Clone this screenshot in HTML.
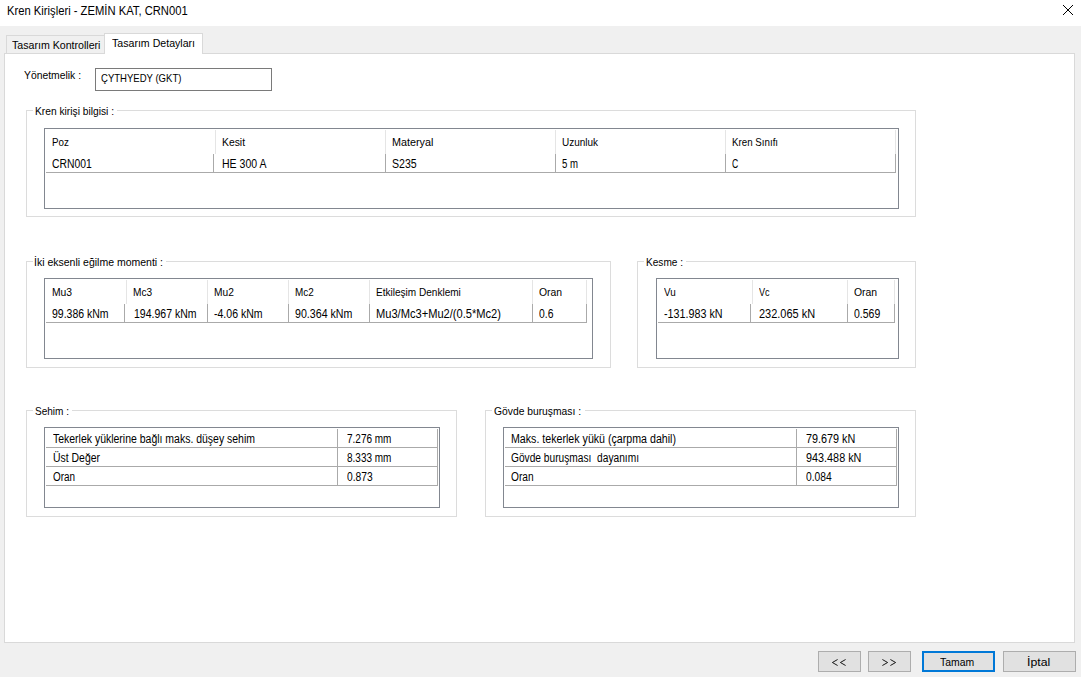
<!DOCTYPE html>
<html><head><meta charset="utf-8"><style>
html,body{margin:0;padding:0}
body{width:1081px;height:677px;background:#f0f0f0;position:relative;overflow:hidden;font-family:"Liberation Sans",sans-serif;color:#000}
.b{position:absolute;box-sizing:content-box}
.t{position:absolute;white-space:pre;transform-origin:0 0}
</style></head><body>
<div class="b" style="left:0px;top:0px;width:1081px;height:26px;background:#ffffff"></div>
<div class="b" style="left:4px;top:53px;width:1069px;height:588px;border:1px solid #d9d9d9;background:#ffffff;"></div>
<div class="b" style="left:6px;top:35px;width:97px;height:17px;border:1px solid #d9d9d9;border-bottom:none;background:#f0f0f0"></div>
<div class="b" style="left:104px;top:33px;width:97px;height:20px;border:1px solid #d9d9d9;border-bottom:none;background:#ffffff"></div>
<div class="b" style="left:95px;top:68px;width:175px;height:21px;border:1px solid #7a7a7a;background:#ffffff;"></div>
<div class="b" style="left:26px;top:110px;width:888px;height:105px;border:1px solid #dcdcdc;"></div>
<div class="b" style="left:33px;top:110px;width:84px;height:1px;background:#ffffff"></div>
<div class="b" style="left:26px;top:261px;width:583px;height:105px;border:1px solid #dcdcdc;"></div>
<div class="b" style="left:33px;top:261px;width:133px;height:1px;background:#ffffff"></div>
<div class="b" style="left:637px;top:261px;width:277px;height:105px;border:1px solid #dcdcdc;"></div>
<div class="b" style="left:644px;top:261px;width:42px;height:1px;background:#ffffff"></div>
<div class="b" style="left:26px;top:410px;width:429px;height:105px;border:1px solid #dcdcdc;"></div>
<div class="b" style="left:33px;top:410px;width:39px;height:1px;background:#ffffff"></div>
<div class="b" style="left:485px;top:410px;width:429px;height:105px;border:1px solid #dcdcdc;"></div>
<div class="b" style="left:492px;top:410px;width:93px;height:1px;background:#ffffff"></div>
<div class="b" style="left:44px;top:128px;width:853px;height:79px;border:1px solid #828790;background:#ffffff;"></div>
<div class="b" style="left:215px;top:130px;width:1px;height:24px;background:#e5e5e5"></div>
<div class="b" style="left:385px;top:130px;width:1px;height:24px;background:#e5e5e5"></div>
<div class="b" style="left:555px;top:130px;width:1px;height:24px;background:#e5e5e5"></div>
<div class="b" style="left:725px;top:130px;width:1px;height:24px;background:#e5e5e5"></div>
<div class="b" style="left:895px;top:130px;width:1px;height:24px;background:#e5e5e5"></div>
<div class="b" style="left:213px;top:154px;width:1px;height:19px;background:#aaaaaa"></div>
<div class="b" style="left:385px;top:154px;width:1px;height:19px;background:#aaaaaa"></div>
<div class="b" style="left:555px;top:154px;width:1px;height:19px;background:#aaaaaa"></div>
<div class="b" style="left:725px;top:154px;width:1px;height:19px;background:#aaaaaa"></div>
<div class="b" style="left:895px;top:154px;width:1px;height:19px;background:#aaaaaa"></div>
<div class="b" style="left:46px;top:172px;width:850px;height:1px;background:#aaaaaa"></div>
<div class="b" style="left:44px;top:278px;width:547px;height:79px;border:1px solid #828790;background:#ffffff;"></div>
<div class="b" style="left:126px;top:280px;width:1px;height:24px;background:#e5e5e5"></div>
<div class="b" style="left:207px;top:280px;width:1px;height:24px;background:#e5e5e5"></div>
<div class="b" style="left:288px;top:280px;width:1px;height:24px;background:#e5e5e5"></div>
<div class="b" style="left:369px;top:280px;width:1px;height:24px;background:#e5e5e5"></div>
<div class="b" style="left:532px;top:280px;width:1px;height:24px;background:#e5e5e5"></div>
<div class="b" style="left:586px;top:280px;width:1px;height:24px;background:#e5e5e5"></div>
<div class="b" style="left:124px;top:304px;width:1px;height:19px;background:#aaaaaa"></div>
<div class="b" style="left:207px;top:304px;width:1px;height:19px;background:#aaaaaa"></div>
<div class="b" style="left:288px;top:304px;width:1px;height:19px;background:#aaaaaa"></div>
<div class="b" style="left:369px;top:304px;width:1px;height:19px;background:#aaaaaa"></div>
<div class="b" style="left:532px;top:304px;width:1px;height:19px;background:#aaaaaa"></div>
<div class="b" style="left:586px;top:304px;width:1px;height:19px;background:#aaaaaa"></div>
<div class="b" style="left:46px;top:322px;width:541px;height:1px;background:#aaaaaa"></div>
<div class="b" style="left:656px;top:278px;width:241px;height:79px;border:1px solid #828790;background:#ffffff;"></div>
<div class="b" style="left:752px;top:280px;width:1px;height:24px;background:#e5e5e5"></div>
<div class="b" style="left:847px;top:280px;width:1px;height:24px;background:#e5e5e5"></div>
<div class="b" style="left:894px;top:280px;width:1px;height:24px;background:#e5e5e5"></div>
<div class="b" style="left:750px;top:304px;width:1px;height:19px;background:#aaaaaa"></div>
<div class="b" style="left:847px;top:304px;width:1px;height:19px;background:#aaaaaa"></div>
<div class="b" style="left:894px;top:304px;width:1px;height:19px;background:#aaaaaa"></div>
<div class="b" style="left:658px;top:322px;width:237px;height:1px;background:#aaaaaa"></div>
<div class="b" style="left:44px;top:427px;width:394px;height:79px;border:1px solid #828790;background:#ffffff;"></div>
<div class="b" style="left:46px;top:447px;width:392px;height:1px;background:#aaaaaa"></div>
<div class="b" style="left:46px;top:466px;width:392px;height:1px;background:#aaaaaa"></div>
<div class="b" style="left:46px;top:485px;width:392px;height:1px;background:#aaaaaa"></div>
<div class="b" style="left:337px;top:429px;width:1px;height:57px;background:#aaaaaa"></div>
<div class="b" style="left:437px;top:429px;width:1px;height:57px;background:#aaaaaa"></div>
<div class="b" style="left:503px;top:427px;width:394px;height:79px;border:1px solid #828790;background:#ffffff;"></div>
<div class="b" style="left:505px;top:447px;width:392px;height:1px;background:#aaaaaa"></div>
<div class="b" style="left:505px;top:466px;width:392px;height:1px;background:#aaaaaa"></div>
<div class="b" style="left:505px;top:485px;width:392px;height:1px;background:#aaaaaa"></div>
<div class="b" style="left:796px;top:429px;width:1px;height:57px;background:#aaaaaa"></div>
<div class="b" style="left:896px;top:429px;width:1px;height:57px;background:#aaaaaa"></div>
<div class="b" style="left:818px;top:651px;width:41px;height:19px;border:1px solid #adadad;background:#e1e1e1;"></div>
<div class="b" style="left:868px;top:651px;width:41px;height:19px;border:1px solid #adadad;background:#e1e1e1;"></div>
<div class="b" style="left:922px;top:651px;width:69px;height:17px;border:2px solid #0078d7;background:#e1e1e1;"></div>
<div class="b" style="left:1003px;top:651px;width:71px;height:19px;border:1px solid #adadad;background:#e1e1e1;"></div>
<svg class="b" style="left:1063px;top:5px" width="10" height="10" viewBox="0 0 10 10" shape-rendering="crispEdges"><rect x="0" y="0" width="1" height="1"/><rect x="9" y="0" width="1" height="1"/><rect x="1" y="1" width="1" height="1"/><rect x="8" y="1" width="1" height="1"/><rect x="2" y="2" width="1" height="1"/><rect x="7" y="2" width="1" height="1"/><rect x="3" y="3" width="1" height="1"/><rect x="6" y="3" width="1" height="1"/><rect x="4" y="4" width="1" height="1"/><rect x="5" y="4" width="1" height="1"/><rect x="5" y="5" width="1" height="1"/><rect x="4" y="5" width="1" height="1"/><rect x="6" y="6" width="1" height="1"/><rect x="3" y="6" width="1" height="1"/><rect x="7" y="7" width="1" height="1"/><rect x="2" y="7" width="1" height="1"/><rect x="8" y="8" width="1" height="1"/><rect x="1" y="8" width="1" height="1"/><rect x="9" y="9" width="1" height="1"/><rect x="0" y="9" width="1" height="1"/></svg>
<svg class="b" style="left:0;top:0" width="1081" height="677" viewBox="0 0 1081 677"><path d="M837.6 659.5 L832.4 662.5 L837.6 665.5 M845.6 659.5 L840.4 662.5 L845.6 665.5 M882.4 659.5 L887.6 662.5 L882.4 665.5 M890.4 659.5 L895.6 662.5 L890.4 665.5" stroke="#000" stroke-width="0.9" fill="none"/></svg>
<div class="t" style="left:7.00px;top:4px;font-size:12px;line-height:14px;transform:scaleX(0.9355)">Kren Kirişleri - ZEMİN KAT, CRN001</div>
<div class="t" style="left:12.00px;top:39px;font-size:11px;line-height:13px;transform:scaleX(0.9644)">Tasarım Kontrolleri</div>
<div class="t" style="left:112.00px;top:37px;font-size:11px;line-height:13px;transform:scaleX(0.9636)">Tasarım Detayları</div>
<div class="t" style="left:24.00px;top:69px;font-size:11px;line-height:13px;transform:scaleX(0.9426)">Yönetmelik :</div>
<div class="t" style="left:100.60px;top:72px;font-size:11px;line-height:13px;transform:scaleX(0.8674)">ÇYTHYEDY (GKT)</div>
<div class="t" style="left:35.00px;top:105px;font-size:11px;line-height:13px;transform:scaleX(0.9304)">Kren kirişi bilgisi :</div>
<div class="t" style="left:52.00px;top:136px;font-size:11px;line-height:13px;transform:scaleX(0.8887)">Poz</div>
<div class="t" style="left:222.00px;top:136px;font-size:11px;line-height:13px;transform:scaleX(0.9427)">Kesit</div>
<div class="t" style="left:392.00px;top:136px;font-size:11px;line-height:13px;transform:scaleX(0.9824)">Materyal</div>
<div class="t" style="left:562.00px;top:136px;font-size:11px;line-height:13px;transform:scaleX(0.9070)">Uzunluk</div>
<div class="t" style="left:732.00px;top:136px;font-size:11px;line-height:13px;transform:scaleX(0.8861)">Kren Sınıfı</div>
<div class="t" style="left:52.00px;top:157px;font-size:12px;line-height:14px;transform:scaleX(0.8631)">CRN001</div>
<div class="t" style="left:222.40px;top:157px;font-size:12px;line-height:14px;transform:scaleX(0.8762)">HE 300 A</div>
<div class="t" style="left:392.00px;top:157px;font-size:12px;line-height:14px;transform:scaleX(0.8818)">S235</div>
<div class="t" style="left:562.00px;top:157px;font-size:12px;line-height:14px;transform:scaleX(0.7997)">5 m</div>
<div class="t" style="left:732.00px;top:157px;font-size:12px;line-height:14px;transform:scaleX(0.7222)">C</div>
<div class="t" style="left:34.05px;top:256px;font-size:11px;line-height:13px;transform:scaleX(0.9549)">İki eksenli eğilme momenti :</div>
<div class="t" style="left:52.00px;top:286px;font-size:11px;line-height:13px;transform:scaleX(0.9398)">Mu3</div>
<div class="t" style="left:133.00px;top:286px;font-size:11px;line-height:13px;transform:scaleX(0.9195)">Mc3</div>
<div class="t" style="left:214.00px;top:286px;font-size:11px;line-height:13px;transform:scaleX(0.9257)">Mu2</div>
<div class="t" style="left:295.00px;top:286px;font-size:11px;line-height:13px;transform:scaleX(0.9002)">Mc2</div>
<div class="t" style="left:376.00px;top:286px;font-size:11px;line-height:13px;transform:scaleX(0.9128)">Etkileşim Denklemi</div>
<div class="t" style="left:539.00px;top:286px;font-size:11px;line-height:13px;transform:scaleX(0.9451)">Oran</div>
<div class="t" style="left:52.00px;top:307px;font-size:12px;line-height:14px;transform:scaleX(0.8748)">99.386 kNm</div>
<div class="t" style="left:134.00px;top:307px;font-size:12px;line-height:14px;transform:scaleX(0.8756)">194.967 kNm</div>
<div class="t" style="left:214.00px;top:307px;font-size:12px;line-height:14px;transform:scaleX(0.8780)">-4.06 kNm</div>
<div class="t" style="left:295.00px;top:307px;font-size:12px;line-height:14px;transform:scaleX(0.8871)">90.364 kNm</div>
<div class="t" style="left:376.00px;top:307px;font-size:12px;line-height:14px;transform:scaleX(0.9256)">Mu3/Mc3+Mu2/(0.5*Mc2)</div>
<div class="t" style="left:539.00px;top:307px;font-size:12px;line-height:14px;transform:scaleX(0.8643)">0.6</div>
<div class="t" style="left:646.00px;top:256px;font-size:11px;line-height:13px;transform:scaleX(0.9183)">Kesme :</div>
<div class="t" style="left:664.00px;top:286px;font-size:11px;line-height:13px;transform:scaleX(0.8972)">Vu</div>
<div class="t" style="left:759.00px;top:286px;font-size:11px;line-height:13px;transform:scaleX(0.8248)">Vc</div>
<div class="t" style="left:854.00px;top:286px;font-size:11px;line-height:13px;transform:scaleX(0.9451)">Oran</div>
<div class="t" style="left:664.00px;top:307px;font-size:12px;line-height:14px;transform:scaleX(0.8963)">-131.983 kN</div>
<div class="t" style="left:759.00px;top:307px;font-size:12px;line-height:14px;transform:scaleX(0.9142)">232.065 kN</div>
<div class="t" style="left:854.00px;top:307px;font-size:12px;line-height:14px;transform:scaleX(0.8730)">0.569</div>
<div class="t" style="left:35.00px;top:405px;font-size:11px;line-height:13px;transform:scaleX(0.9131)">Sehim :</div>
<div class="t" style="left:52.50px;top:432px;font-size:12px;line-height:14px;transform:scaleX(0.8728)">Tekerlek yüklerine bağlı maks. düşey sehim</div>
<div class="t" style="left:346.50px;top:432px;font-size:12px;line-height:14px;transform:scaleX(0.8321)">7.276 mm</div>
<div class="t" style="left:52.50px;top:451px;font-size:12px;line-height:14px;transform:scaleX(0.8700)">Üst Değer</div>
<div class="t" style="left:346.50px;top:451px;font-size:12px;line-height:14px;transform:scaleX(0.8321)">8.333 mm</div>
<div class="t" style="left:52.50px;top:470px;font-size:12px;line-height:14px;transform:scaleX(0.8268)">Oran</div>
<div class="t" style="left:346.50px;top:470px;font-size:12px;line-height:14px;transform:scaleX(0.8565)">0.873</div>
<div class="t" style="left:494.00px;top:405px;font-size:11px;line-height:13px;transform:scaleX(0.9367)">Gövde buruşması :</div>
<div class="t" style="left:511.00px;top:432px;font-size:12px;line-height:14px;transform:scaleX(0.8868)">Maks. tekerlek yükü (çarpma dahil)</div>
<div class="t" style="left:805.50px;top:432px;font-size:12px;line-height:14px;transform:scaleX(0.9012)">79.679 kN</div>
<div class="t" style="left:511.00px;top:451px;font-size:12px;line-height:14px;transform:scaleX(0.8490)">Gövde buruşması  dayanımı</div>
<div class="t" style="left:805.50px;top:451px;font-size:12px;line-height:14px;transform:scaleX(0.9026)">943.488 kN</div>
<div class="t" style="left:511.00px;top:470px;font-size:12px;line-height:14px;transform:scaleX(0.8460)">Oran</div>
<div class="t" style="left:805.50px;top:470px;font-size:12px;line-height:14px;transform:scaleX(0.8565)">0.084</div>
<div class="t" style="left:940.00px;top:656px;font-size:11px;line-height:13px;transform:scaleX(0.9471)">Tamam</div>
<div class="t" style="left:1026.88px;top:656px;font-size:11px;line-height:13px;transform:scaleX(1.1164)">İptal</div>
</body></html>
